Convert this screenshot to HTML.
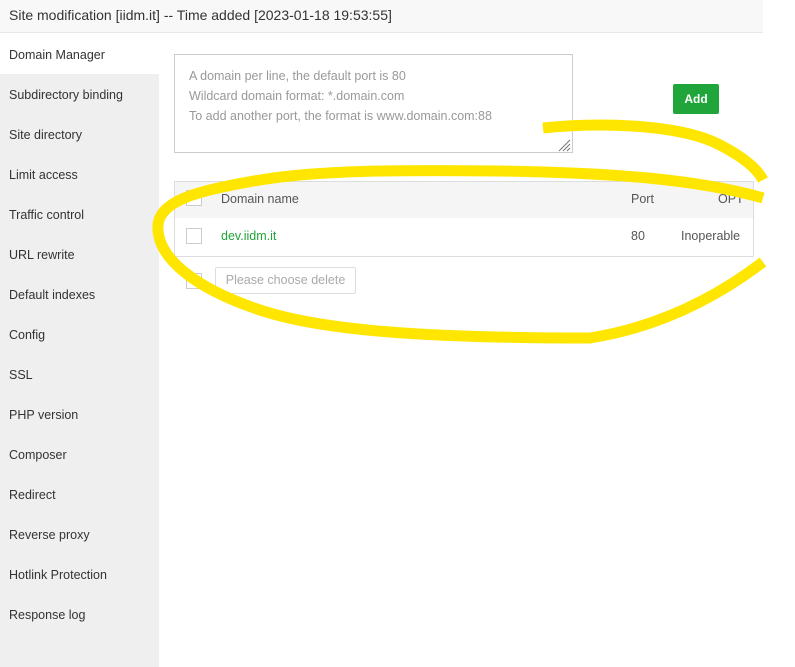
<!DOCTYPE html>
<html><head><style>
body{margin:0;width:795px;height:667px;background:#fff;font-family:"Liberation Sans",sans-serif;position:relative;overflow:hidden}
.hdr{position:absolute;left:0;top:0;width:763px;height:33px;background:#f8f8f8;border-bottom:1px solid #e8e8e8;font-size:14px;color:#333;line-height:31px;padding-left:9px;box-sizing:border-box}
.side{position:absolute;left:0;top:34px;width:159px;height:633px;background:#efefef}
.side div{height:40px;line-height:42px;padding-left:9px;font-size:12.5px;color:#333}
.side .act{background:#fff}
.ta{position:absolute;left:174px;top:54px;width:399px;height:99px;border:1px solid #ccc;box-sizing:border-box;padding:11px 14px;font-size:12.5px;color:#999;line-height:20px}
.add{position:absolute;left:673px;top:84px;width:46px;height:30px;background:#20a53a;color:#fff;font-size:12px;font-weight:bold;line-height:30px;text-align:center;border-radius:2px}
.tbl{position:absolute;left:174px;top:181px;width:580px;height:76px;border:1px solid #ddd;box-sizing:border-box}
.th{height:36px;background:#f5f5f5}
.cb{position:absolute;width:14px;height:14px;border:1px solid #ccc;background:#fff}
.t{position:absolute;font-size:12.5px;color:#555}
.btn{position:absolute;left:215px;top:267px;width:141px;height:27px;border:1px solid #ddd;border-radius:2px;box-sizing:border-box;font-size:12.5px;color:#aaa;line-height:25px;text-align:center}
</style></head><body>
<div class="hdr">Site modification [iidm.it] -- Time added [2023-01-18 19:53:55]</div>
<div class="side">
<div class="act">Domain Manager</div><div>Subdirectory binding</div><div>Site directory</div><div>Limit access</div><div>Traffic control</div><div>URL rewrite</div><div>Default indexes</div><div>Config</div><div>SSL</div><div>PHP version</div><div>Composer</div><div>Redirect</div><div>Reverse proxy</div><div>Hotlink Protection</div><div>Response log</div>
</div>
<div class="ta">A domain per line, the default port is 80<br>Wildcard domain format: *.domain.com<br>To add another port, the format is www.domain.com:88</div>
<svg style="position:absolute;left:557px;top:138px" width="14" height="14"><path d="M2 13L13 2M6 13L13 6M10 13L13 10" stroke="#777" stroke-width="1"/></svg>
<div class="add">Add</div>
<div class="tbl"><div class="th"></div></div>
<div class="cb" style="left:186px;top:190px"></div>
<div class="cb" style="left:186px;top:228px"></div>
<div class="cb" style="left:186px;top:273px"></div>
<div class="t" style="left:221px;top:192px">Domain name</div>
<div class="t" style="left:631px;top:192px">Port</div>
<div class="t" style="left:718px;top:192px">OPT</div>
<div class="t" style="left:221px;top:229px;color:#20a53a">dev.iidm.it</div>
<div class="t" style="left:631px;top:229px">80</div>
<div class="t" style="left:681px;top:229px">Inoperable</div>
<div class="btn">Please choose delete</div>
<div style="position:absolute;left:763px;top:0;width:32px;height:667px;background:#fff"></div>
<svg style="position:absolute;left:0;top:0" width="795" height="667">
<path d="M543 128 C600 122 680 124 720 145 C745 158 758 170 763 180" stroke="#ffe600" stroke-width="11" fill="none"/>
<path d="M763 198 C700 180 620 173 500 171 C400 170 320 170 260 180 C200 190 160 200 158 225 C156 260 200 290 260 310 C320 330 420 338 590 338 C640 330 700 310 763 262" stroke="#ffe600" stroke-width="11" fill="none"/>
</svg>
</body></html>
